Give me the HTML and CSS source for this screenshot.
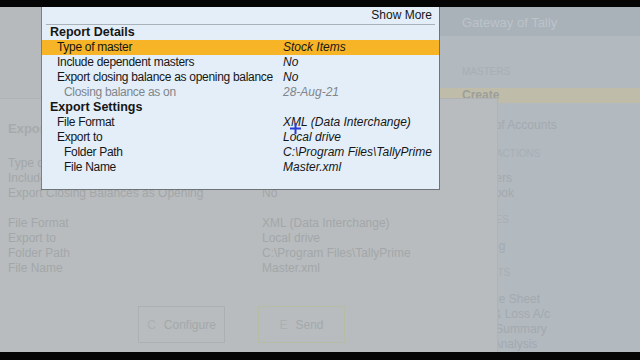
FILE: index.html
```html
<!DOCTYPE html>
<html>
<head>
<meta charset="utf-8">
<link rel="stylesheet" href="styles.css">
</head>
<body>
<div class="screen">
  <div class="bar-top"></div>
  <main class="app">
    <div class="workspace"></div>
    <aside class="gateway">
      <div class="gw-head">Gateway of Tally</div>
      <div class="gw-body">
        <div class="gw-cap gw-first">MASTERS</div>
        <div class="gw-item gw-sel">Create</div>
        <div class="gw-item">Alter</div>
        <div class="gw-item">Chart of Accounts</div>
        <div class="gw-cap gw-gap">TRANSACTIONS</div>
        <div class="gw-item gw-gap2">Vouchers</div>
        <div class="gw-item">Day Book</div>
        <div class="gw-cap gw-gap3">UTILITIES</div>
        <div class="gw-item gw-gap4">Banking</div>
        <div class="gw-cap gw-gap3">REPORTS</div>
        <div class="gw-item gw-gap4">Balance Sheet</div>
        <div class="gw-item">Profit &amp; Loss A/c</div>
        <div class="gw-item">Stock Summary</div>
        <div class="gw-item">Ratio Analysis</div>
      </div>
    </aside>

    <section class="export-dlg">
      <div class="ed-title">Export</div>
      <div class="ed-rows ed-rows1">
        <div class="ed-row"><span class="ed-k">Type of master</span><span class="ed-v">Stock Items</span></div>
        <div class="ed-row"><span class="ed-k">Include dependent masters</span><span class="ed-v">No</span></div>
        <div class="ed-row"><span class="ed-k">Export Closing Balances as Opening</span><span class="ed-v">No</span></div>
      </div>
      <div class="ed-rows ed-rows2">
        <div class="ed-row"><span class="ed-k">File Format</span><span class="ed-v">XML (Data Interchange)</span></div>
        <div class="ed-row"><span class="ed-k">Export to</span><span class="ed-v">Local drive</span></div>
        <div class="ed-row"><span class="ed-k">Folder Path</span><span class="ed-v">C:\Program Files\TallyPrime</span></div>
        <div class="ed-row"><span class="ed-k">File Name</span><span class="ed-v">Master.xml</span></div>
      </div>
      <div class="ed-btns">
        <div class="ed-btn"><span class="ed-key">C</span>Configure</div>
        <div class="ed-btn ed-btn-send"><span class="ed-key">E</span>Send</div>
      </div>
    </section>

    <section class="popup">
      <div class="pp-top"><span class="pp-more">Show More</span></div>
      <div class="pp-sec">Report Details</div>
      <div class="pp-row pp-sel"><span class="pp-k">Type of master</span><span class="pp-v">Stock Items</span></div>
      <div class="pp-row"><span class="pp-k">Include dependent masters</span><span class="pp-v">No</span></div>
      <div class="pp-row"><span class="pp-k">Export closing balance as opening balance</span><span class="pp-v">No</span></div>
      <div class="pp-row pp-dim"><span class="pp-k pp-sub">Closing balance as on</span><span class="pp-v">28-Aug-21</span></div>
      <div class="pp-sec">Export Settings</div>
      <div class="pp-row"><span class="pp-k">File Format</span><span class="pp-v">XML (Data Interchange)</span></div>
      <div class="pp-row"><span class="pp-k">Export to</span><span class="pp-v">Local drive</span></div>
      <div class="pp-row"><span class="pp-k pp-sub">Folder Path</span><span class="pp-v">C:\Program Files\TallyPrime</span></div>
      <div class="pp-row"><span class="pp-k pp-sub">File Name</span><span class="pp-v">Master.xml</span></div>
    </section>

    <svg class="cursor" width="11" height="11" viewBox="0 0 11 11"><path d="M5.5 0V11M0 5.5H11" stroke="#2a3bd6" stroke-width="2"/></svg>
  </main>
  <div class="bar-bottom"></div>
</div>
</body>
</html>
```

FILE: styles.css
```css
* { box-sizing: border-box; }
html, body { margin: 0; padding: 0; }
body {
  width: 640px;
  height: 360px;
  overflow: hidden;
  background: #000;
  font-family: "Liberation Sans", Arial, sans-serif;
}
.screen { display: flex; flex-direction: column; width: 640px; height: 360px; }
.bar-top { height: 7px; background: #050505; flex: none; }
.bar-bottom { height: 8px; background: #050505; flex: none; }
.app {
  position: relative;
  flex: none;
  height: 345px;
  display: flex;
  overflow: hidden;
  white-space: nowrap;
}
.workspace { width: 440px; background: #b6babc; }
.gateway { width: 200px; background: #b2b9bf; display: flex; flex-direction: column; }
.gw-head {
  height: 29px;
  background: #a9b2b9;
  color: #bcc3c9;
  font-size: 13px;
  padding: 8px 0 0 22px;
}
.gw-body { font-size: 12px; color: #a3aab0; }
.gw-cap { font-size: 10px; padding-left: 22px; height: 14px; line-height: 14px; color: #a8afb5; }
.gw-first { margin-top: 29px; }
.gw-item { height: 15px; line-height: 15px; padding-left: 22px; }
.gw-sel { background: #bfbda9; margin-top: 9px; color: #9c9f9c; font-weight: bold; }
.gw-gap { margin-top: 14px; }
.gw-gap2 { margin-top: 10px; }
.gw-gap3 { margin-top: 12px; }
.gw-gap4 { margin-top: 12px; }

.export-dlg {
  position: absolute;
  left: 0;
  top: 91px;
  width: 498px;
  bottom: 0;
  background: #b8bcbe;
  border-right: 1px solid #aeb4b8;
  border-top: 1px solid #afb3b5;
  color: #a3a7a9;
  font-size: 12px;
  display: flex;
  flex-direction: column;
}
.ed-title { font-size: 13px; font-weight: bold; padding: 22px 0 0 8px; height: 44px; color: #a6aaac; }
.ed-rows1 { margin-top: 13px; }
.ed-rows2 { margin-top: 15px; }
.ed-row { display: flex; height: 15px; line-height: 15px; padding-left: 8px; }
.ed-k { width: 254px; flex: none; }
.ed-btns { display: flex; gap: 33px; padding-left: 138px; margin-top: 30px; }
.ed-btn {
  width: 87px;
  height: 37px;
  border: 1px solid #acb0b3;
  display: flex;
  align-items: center;
  justify-content: center;
  font-size: 12px;
  color: #a4a8aa;
}
.ed-btn-send { border-color: #b7bca7; }
.ed-key { margin-right: 8px; color: #abafb1; }

.popup {
  position: absolute;
  left: 41px;
  top: 0;
  width: 399px;
  height: 183px;
  background: #e3eef9;
  border-left: 1px solid #7a8084;
  border-right: 1px solid #6d7377;
  border-bottom: 1px solid #6d7377;
  color: #161616;
  font-size: 12px;
  letter-spacing: -0.3px;
}
.pp-top {
  margin: 0 4px 0 4px;
  height: 18px;
  border-bottom: 1px solid #a9b1b9;
  display: flex;
  justify-content: flex-end;
  align-items: flex-end;
  padding: 0 3px 2px 0;
}
.pp-more { font-size: 12px; line-height: 14px; letter-spacing: 0; }
.pp-sec { font-weight: bold; font-size: 12.5px; height: 15px; line-height: 15px; padding-left: 8px; letter-spacing: 0; }
.pp-row { display: flex; height: 15px; line-height: 15px; padding-left: 15px; }
.pp-k { width: 226px; flex: none; }
.pp-sub { padding-left: 7px; }
.pp-v { font-style: italic; letter-spacing: 0; }
.pp-sel { background: #f6b426; }
.pp-dim { color: #7f858a; }

.cursor { position: absolute; left: 290px; top: 116px; }
```
